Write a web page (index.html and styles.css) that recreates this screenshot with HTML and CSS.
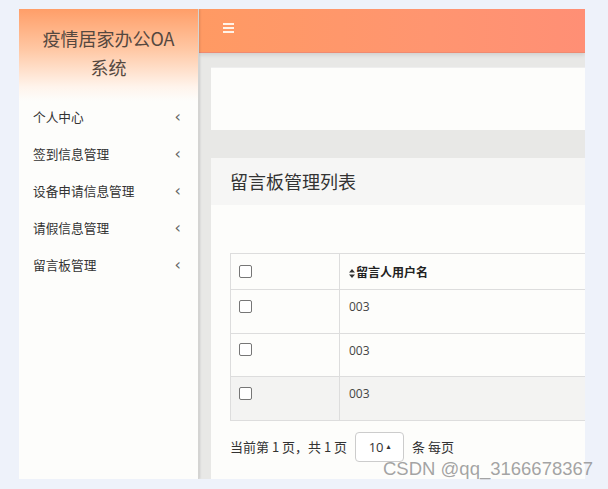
FILE: index.html
```html
<!DOCTYPE html>
<html lang="zh">
<head>
<meta charset="utf-8">
<title>疫情居家办公OA系统</title>
<link rel="stylesheet" href="styles.css">
</head>
<body>
<div class="app">
  <aside class="sidebar">
    <div class="brand">疫情居家办公OA<br>系统</div>
    <ul class="menu">
      <li><span>个人中心</span><span class="chev">‹</span></li>
      <li><span>签到信息管理</span><span class="chev">‹</span></li>
      <li><span>设备申请信息管理</span><span class="chev">‹</span></li>
      <li><span>请假信息管理</span><span class="chev">‹</span></li>
      <li><span>留言板管理</span><span class="chev">‹</span></li>
    </ul>
  </aside>
  <main class="main">
    <header class="topbar">
      <span class="burger"><i></i><i></i><i></i></span>
    </header>
    <div class="content">
      <div class="card card-top"></div>
      <div class="card card-list">
        <div class="card-title">留言板管理列表</div>
        <div class="card-body">
          <table class="grid">
            <thead>
              <tr><th class="c-check"><span class="box"></span></th><th class="c-name"><svg class="sort" width="6" height="9" viewBox="0 0 6 9"><path d="M3 0 L6 3.6 H0 Z M3 9 L6 5.4 H0 Z" fill="#333"/></svg>留言人用户名</th></tr>
            </thead>
            <tbody>
              <tr><td class="c-check"><span class="box"></span></td><td>003</td></tr>
              <tr><td class="c-check"><span class="box"></span></td><td>003</td></tr>
              <tr class="hover"><td class="c-check"><span class="box"></span></td><td>003</td></tr>
            </tbody>
          </table>
          <div class="pager">
            <span>当前第 1 页，共 1 页</span>
            <span class="size">10 <span class="caret">▴</span></span>
            <span>条 每页</span>
          </div>
        </div>
      </div>
    </div>
  </main>
</div>
<div class="watermark">CSDN @qq_3166678367</div>
</body>
</html>
```
FILE: styles.css
```css
html, body {
  margin: 0;
  padding: 0;
}
body {
  background: #eef2fa;
  font-family: "Open Sans", "Noto Sans CJK SC", sans-serif;
  color: #333;
  width: 608px;
  height: 489px;
  overflow: hidden;
  position: relative;
}
.app {
  display: flex;
  margin: 9px 23px 0 19px;
  height: 470px;
  overflow: hidden;
}
.sidebar {
  width: 179px;
  flex: none;
  background: linear-gradient(to bottom, #ff9e68 0px, #ffc7a3 40px, #fff4ec 78px, #fdfdfb 92px);
  border-right: 1px solid #d4d4d2;
  box-shadow: 1px 0 2px rgba(0,0,0,0.12);
  position: relative;
  z-index: 2;
}
.brand {
  padding: 15px 0 16px;
  text-align: center;
  font-family: "Noto Sans CJK SC", sans-serif;
  font-size: 18px;
  line-height: 29px;
  color: #554840;
}
.menu {
  list-style: none;
  margin: 0;
  padding: 0;
}
.menu li {
  display: flex;
  justify-content: space-between;
  align-items: center;
  height: 37px;
  padding: 0 17px 0 14px;
  font-family: "Noto Sans CJK SC", sans-serif;
  font-size: 12.7px;
  color: #333;
}
.chev {
  font-family: "DejaVu Sans", sans-serif;
  font-size: 16px;
  line-height: 16px;
  color: #666;
}
.main {
  flex: 1;
  background: #e8e8e6;
  display: flex;
  flex-direction: column;
  min-width: 0;
}
.topbar {
  height: 44px;
  flex: none;
  background: linear-gradient(to right, #ff9a63, #ff9570 60%, #ff8f75);
  border-bottom: 1px solid #f08a70;
  box-shadow: 0 2px 4px rgba(0,0,0,0.10);
  display: flex;
  align-items: center;
  padding-left: 24px;
  box-sizing: border-box;
}
.burger {
  display: flex;
  flex-direction: column;
  gap: 2px;
  margin-top: -5px;
}
.burger i {
  display: block;
  width: 11px;
  height: 2px;
  background: #fff3e8;
}
.content {
  padding: 14px 0 0 12px;
}
.card {
  background: #fdfdfb;
}
.card-top {
  height: 62px;
  border-top: 1px solid #eee;
}
.card-list {
  margin-top: 28px;
}
.card-title {
  height: 47px;
  background: #f6f6f5;
  padding-left: 19px;
  font-family: "Noto Sans CJK SC", sans-serif;
  font-size: 18px;
  line-height: 47px;
  color: #333;
}
.card-body {
  padding: 48px 0 20px 19px;
}
.grid {
  border-collapse: collapse;
  width: 420px;
  font-size: 12px;
  border: 1px solid #ddd;
  border-right: none;
}
.grid th, .grid td {
  border: 1px solid #ddd;
  border-right: none;
  text-align: left;
  padding: 8px 9px;
  line-height: 18px;
}
.grid th {
  height: 19px;
  vertical-align: middle;
  font-weight: bold;
  font-family: "Noto Sans CJK SC", sans-serif;
  color: #222;
}
.grid td {
  height: 26.5px;
  vertical-align: top;
  color: #444;
}
.grid .c-check {
  width: 91px;
  padding-left: 8px;
}
.grid tr.hover td {
  background: #f3f3f2;
}
.box {
  display: inline-block;
  width: 11px;
  height: 11px;
  border: 1px solid #767676;
  border-radius: 2px;
  background: #fff;
  vertical-align: middle;
  margin-top: -3px;
}
.sort {
  margin-right: 1px;
  vertical-align: -1px;
}
.pager {
  display: flex;
  align-items: center;
  margin-top: 11px;
  font-size: 13px;
  color: #333;
  font-family: "Noto Sans CJK SC", sans-serif;
  gap: 8px;
}
.size {
  display: inline-flex;
  align-items: center;
  justify-content: center;
  width: 47px;
  height: 28px;
  border: 1px solid #ccc;
  border-radius: 4px;
  font-family: "Open Sans", sans-serif;
  font-size: 13px;
  background: #fff;
  gap: 3px;
}
.caret {
  font-size: 8px;
  font-family: "DejaVu Sans", sans-serif;
}
.watermark {
  position: absolute;
  left: 383px;
  top: 458px;
  font-family: "Liberation Sans", Arial, sans-serif;
  font-size: 18.5px;
  color: rgba(140,140,140,0.8);
  white-space: nowrap;
  z-index: 5;
}
```
